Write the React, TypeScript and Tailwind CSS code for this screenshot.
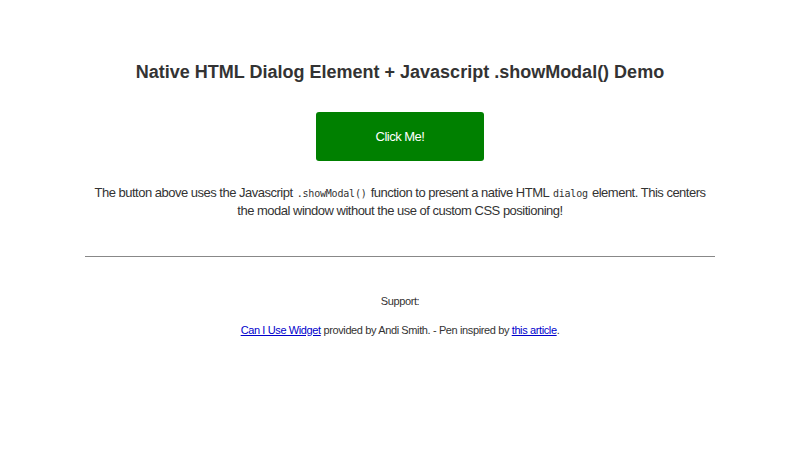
export default function App() {
  return (
    <main className="min-h-[450px] bg-white font-['Liberation_Sans',Arial,sans-serif] text-[#333]">
      <div className="mx-auto w-[630px] pt-[60px] text-center">
        <h1 className="text-[18px] font-bold leading-[24px]">
          Native HTML Dialog Element + Javascript .showModal() Demo
        </h1>

        <button className="mt-[28px] h-[49px] w-[168px] rounded-[3px] bg-[#008000] text-[13px] tracking-[-0.5px] text-white">
          Click Me!
        </button>

        <p className="mt-[23px] px-[6px] text-[13px] leading-[18px] tracking-[-0.5px]">
          The button above uses the Javascript{" "}
          <code className="mx-[1px] font-['DejaVu_Sans_Mono',monospace] text-[10px] leading-none tracking-[-0.2px]">.showModal()</code>{" "}
          function to present a native HTML{" "}
          <code className="mx-[1px] font-['DejaVu_Sans_Mono',monospace] text-[10px] leading-none tracking-[-0.2px]">dialog</code>{" "}
          element. This centers the modal window without the use of custom CSS positioning!
        </p>

        <hr className="mt-[36px] border-t border-[#888]" />

        <footer className="mt-[37px] text-[11px] leading-[14px] tracking-[-0.38px]">
          <p>Support:</p>
          <p className="mt-[15px]">
            <a href="#" className="text-[#00c] underline">Can I Use Widget</a> provided by Andi Smith. - Pen
            inspired by <a href="#" className="text-[#00c] underline">this article</a>.
          </p>
        </footer>
      </div>
    </main>
  );
}
